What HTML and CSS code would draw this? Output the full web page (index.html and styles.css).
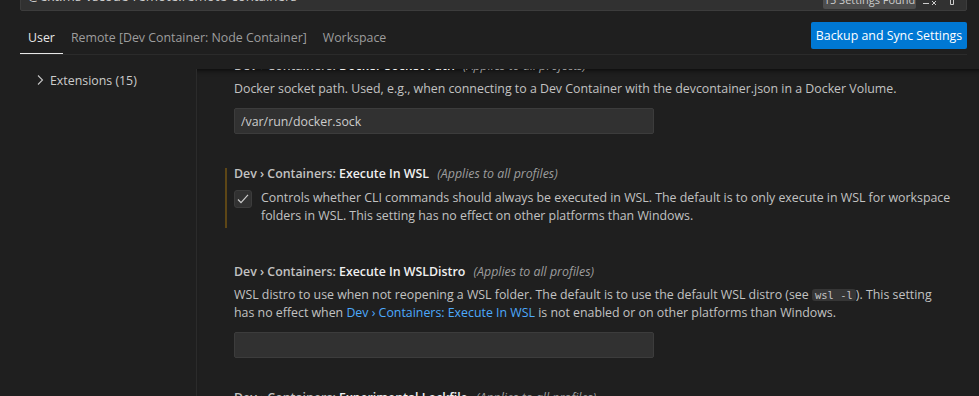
FILE: index.html
```html
<!DOCTYPE html>
<html lang="en">

<head>
    <meta charset="UTF-8">
    <meta name="viewport" content="width=device-width, initial-scale=1.0">
    <title>Settings</title>
    <link rel="stylesheet" href="styles.css">
</head>

<body>
    <div class="header">
        <div class="search">
            <span class="search-text">@ext:ms-vscode-remote.remote-containers</span>
            <span class="search-count">15 Settings Found</span>
            <span class="search-action">
                <svg width="16" height="16" viewBox="0 0 16 16" fill="none" stroke="#cccccc" stroke-width="1">
                    <path d="M1 4.5h9M1 8.5h9M1 12.5h6M10 10l4 4M14 10l-4 4" />
                </svg>
            </span>
            <span class="search-action">
                <svg width="16" height="16" viewBox="0 0 16 16" fill="none" stroke="#cccccc" stroke-width="1">
                    <path d="M6.5 2.5h3v11h-3z" />
                </svg>
            </span>
        </div>

        <div class="tabs-row">
            <div class="tabs">
                <div class="tab active">User</div>
                <div class="tab">Remote [Dev Container: Node Container]</div>
                <div class="tab">Workspace</div>
            </div>
            <button class="sync-button">Backup and Sync Settings</button>
        </div>
    </div>

    <div class="body">
        <nav class="toc">
            <div class="toc-item">
                <svg width="16" height="16" viewBox="0 0 16 16" fill="none" stroke="#c5c5c5" stroke-width="1.1">
                    <path d="M6 3.5l4.5 4.5L6 12.5" />
                </svg>
                <span>Extensions (15)</span>
            </div>
        </nav>

        <main class="settings">
            <div class="settings-list">
                <div class="setting">
                    <div class="setting-title">
                        <span class="category">Dev › Containers: </span><span class="label">Docker Socket Path</span>
                        <span class="scope">(Applies to all projects)</span>
                    </div>
                    <div class="setting-desc">Docker socket path. Used, e.g., when connecting to a Dev Container with the devcontainer.json in a Docker Volume.</div>
                    <input class="setting-input" type="text" value="/var/run/docker.sock">
                </div>

                <div class="setting bool modified">
                    <div class="setting-title">
                        <span class="category">Dev › Containers: </span><span class="label">Execute In WSL</span>
                        <span class="scope">(Applies to all profiles)</span>
                    </div>
                    <div class="bool-row">
                        <span class="checkbox">
                            <svg width="16" height="16" viewBox="0 0 16 16" fill="none" stroke="#cccccc" stroke-width="1.2">
                                <path d="M3 8.5l3 3.2L13 3.8" />
                            </svg>
                        </span>
                        <div class="setting-desc">Controls whether CLI commands should always be executed in WSL. The default is to only execute in WSL for workspace folders in WSL. This setting has no effect on other platforms than Windows.</div>
                    </div>
                </div>

                <div class="setting">
                    <div class="setting-title">
                        <span class="category">Dev › Containers: </span><span class="label">Execute In WSLDistro</span>
                        <span class="scope">(Applies to all profiles)</span>
                    </div>
                    <div class="setting-desc">WSL distro to use when not reopening a WSL folder. The default is to use the default WSL distro (see <code>wsl -l</code>). This setting has no effect when <a href="#">Dev › Containers: Execute In WSL</a> is not enabled or on other platforms than Windows.</div>
                    <input class="setting-input" type="text" value="">
                </div>

                <div class="setting">
                    <div class="setting-title">
                        <span class="category">Dev › Containers: </span><span class="label">Experimental Lockfile</span>
                        <span class="scope">(Applies to all profiles)</span>
                    </div>
                </div>
            </div>
        </main>
    </div>
</body>

</html>
```

FILE: styles.css
```css
* {
    box-sizing: border-box;
}

body {
    margin: 0;
    height: 396px;
    overflow: hidden;
    background-color: #1f1f1f;
    color: #cccccc;
    font-family: 'Open Sans', 'Noto Sans', sans-serif;
    font-size: 12.37px;
}

/* header: search + tabs */

.header {
    padding: 0 12px 0 20px;
}

.search {
    display: flex;
    align-items: center;
    height: 30px;
    margin-top: -19px;
    padding: 0 6px 0 7px;
    background-color: #313131;
    border: 1px solid #3c3c3c;
    border-radius: 2px;
    font-size: 13.3px;
}

.search-text {
    flex: 1;
}

.search-count {
    width: 93px;
    margin-top: 8px;
    line-height: 18px;
    font-size: 11px;
    text-align: center;
    white-space: nowrap;
    overflow: hidden;
    background-color: #4d4d4d;
    color: #cccccc;
    border-radius: 2px;
}

.search-action {
    display: flex;
    margin-left: 6px;
    margin-top: 6px;
}

.tabs-row {
    display: flex;
    justify-content: space-between;
    align-items: flex-start;
    margin-top: 11px;
    height: 33px;
    border-bottom: 1px solid #2b2b2b;
}

.tabs {
    display: flex;
}

.tab {
    height: 32px;
    padding: 6px 8px 0;
    line-height: 20px;
    color: #9d9d9d;
    border-bottom: 1px solid transparent;
}

.tab.active {
    color: #e7e7e7;
    border-bottom-color: #e7e7e7;
}

.sync-button {
    width: 156px;
    height: 27px;
    padding: 0;
    border: none;
    border-radius: 2px;
    background-color: #0078d4;
    color: #ffffff;
    font-family: inherit;
    font-size: 12.37px;
}

/* body: toc + settings list */

.body {
    display: flex;
    height: 341px;
    padding-left: 20px;
}

.toc {
    width: 176px;
    padding-top: 14px;
}

.toc-item {
    display: flex;
    align-items: center;
    height: 22px;
    padding-left: 12px;
    gap: 2px;
    color: #cccccc;
}

.settings {
    flex: 1;
    margin-top: 14px;
    border-left: 1px solid #2b2b2b;
    overflow: hidden;
    box-shadow: inset 0 6px 6px -6px #000;
}

.settings-list {
    margin-top: -26px;
}

.setting {
    position: relative;
    padding: 12px 26px 17px 37px;
}

.setting-title {
    line-height: 22px;
    white-space: nowrap;
}

.category {
    font-weight: 600;
    color: #c2c2c2;
}

.label {
    font-weight: 600;
    color: #f0f0f0;
}

.scope {
    margin-left: 5px;
    font-style: italic;
    color: #9d9d9d;
}

.setting-desc {
    margin-top: 3px;
    line-height: 18px;
    color: #c2c2c2;
}

.setting-desc a {
    color: #4daafc;
    text-decoration: none;
}

.setting-desc code {
    padding: 0 3px;
    font-family: 'DejaVu Sans Mono', monospace;
    font-size: 10.5px;
    line-height: 14px;
    background-color: #363636;
    border-radius: 3px;
}

.setting-input {
    display: block;
    width: 420px;
    height: 26px;
    margin-top: 10px;
    padding: 0 6px;
    background-color: #313131;
    border: 1px solid #3c3c3c;
    border-radius: 2px;
    color: #cccccc;
    font-family: inherit;
    font-size: 12.37px;
}

.bool-row {
    display: flex;
    align-items: flex-start;
    gap: 9px;
    margin-top: 4px;
    margin-bottom: 7px;
}

.bool-row .setting-desc {
    margin-top: 0;
}

.checkbox {
    flex: none;
    display: flex;
    align-items: center;
    justify-content: center;
    width: 18px;
    height: 18px;
    margin-top: 1px;
    background-color: #313131;
    border: 1px solid #3c3c3c;
    border-radius: 3px;
}

.setting.modified::before {
    content: '';
    position: absolute;
    left: 28px;
    top: 17px;
    bottom: 21px;
    width: 2px;
    background-color: #5d4616;
}
```
